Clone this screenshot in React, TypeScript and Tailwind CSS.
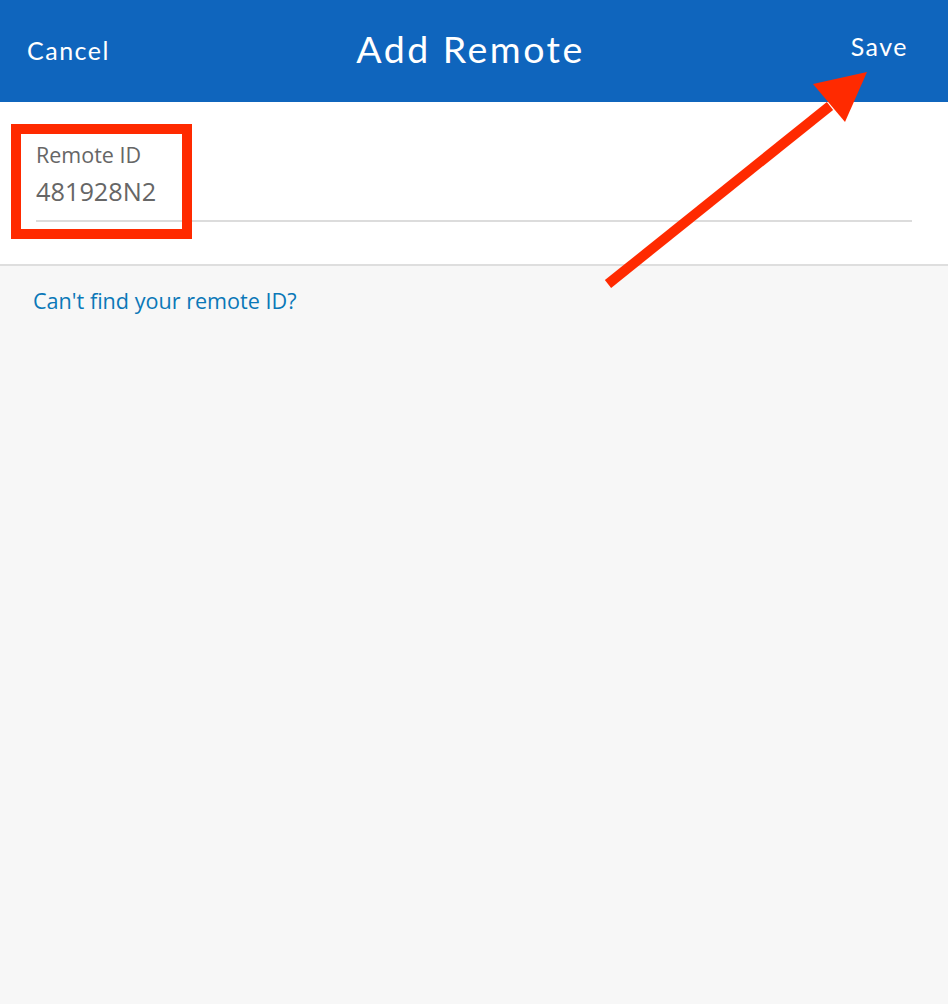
import React from 'react';

// Annotation arrow pointing at the Save button
const Arrow = () => (
  <svg className="absolute left-0 top-0 pointer-events-none" width="948" height="1004" viewBox="0 0 948 1004">
    <line x1="608" y1="284" x2="830" y2="106" stroke="#ff2a00" strokeWidth="10" />
    <polygon points="867,72 813,84 845,122" fill="#ff2a00" />
  </svg>
);

export default function App() {
  return (
    <div className="relative w-[948px] h-[1004px] bg-[#f7f7f7] overflow-hidden font-['Open_Sans',sans-serif]">
      <header className="h-[102px] bg-[#0f65bd] grid grid-cols-[1fr_auto_1fr] items-center pl-[27px] pr-[40px] text-white font-['Lato','Open_Sans',sans-serif]">
        <button className="justify-self-start text-[25px] tracking-[1.5px]">Cancel</button>
        <h1 className="text-[37.5px] tracking-[2.5px] pb-[4px] ml-[6px]">Add Remote</h1>
        <button className="justify-self-end text-[25px] tracking-[1.5px] pb-[8px]">Save</button>
      </header>

      <section className="bg-white border-b-2 border-[#dedede] h-[164px] px-[36px] pt-[38px]">
        <div className="border-b-2 border-[#dcdcdc] pb-[12px]">
          <div className="text-[21.5px] text-[#666] leading-[30px]">Remote ID</div>
          <div className="text-[25.3px] text-[#666] leading-[34px] mt-[4px]">481928N2</div>
        </div>
      </section>

      <div className="px-[33px] pt-[19px]">
        <a className="text-[21.6px] text-[#0b78b8]">Can't find your remote ID?</a>
      </div>

      {/* red highlight box */}
      <div className="absolute left-[11px] top-[124px] w-[181px] h-[115px] border-[10px] border-[#ff2a00]" />
      <Arrow />
    </div>
  );
}
